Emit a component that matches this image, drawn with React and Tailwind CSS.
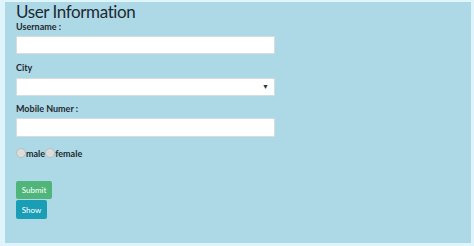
import React from 'react'

const App = () => {
  return (
    <div className="w-[474px] h-[246px] bg-[#dff5fb] pl-[5px] pt-[2px] pr-[3px] pb-[3px] font-['Lato','Open_Sans',sans-serif]">
      <div className="w-full h-full bg-[#add8e6] pl-[11px] flex flex-col items-start text-[#1f2a30]">
        <h1 className="text-[17px] leading-[20px] font-normal text-[#1c2a33] tracking-[-0.4px]">User Information</h1>
        <label className="text-[9px] leading-[10px] font-bold">Username :</label>
        <input type="text" className="mt-[4px] w-[259px] h-[18px] bg-white border border-[#d4dde0] rounded-[1px] outline-none" />

        <label className="mt-[9px] text-[9px] leading-[10px] font-bold">City</label>
        <div className="relative mt-[5px] w-[259px] h-[18px]">
          <select className="w-full h-full appearance-none bg-white border border-[#d4dde0] rounded-[1px] outline-none"></select>
          <span className="absolute right-[6px] top-[4px] text-[7px] leading-[9px] text-[#333]">▼</span>
        </div>

        <label className="mt-[8px] text-[9px] leading-[10px] font-bold">Mobile Numer :</label>
        <input type="text" className="mt-[4px] w-[259px] h-[19px] bg-white border border-[#d4dde0] rounded-[1px] outline-none" />

        <div className="mt-[12px] flex items-center text-[9px] leading-[10px] font-bold">
          <input type="radio" name="gender" className="appearance-none w-[10px] h-[10px] rounded-full bg-[#dcdcdc] border border-[#bdbdbd] -mt-[3px]" />
          <span>male</span>
          <input type="radio" name="gender" className="appearance-none w-[10px] h-[10px] rounded-full bg-[#dcdcdc] border border-[#bdbdbd] -mt-[3px]" />
          <span>female</span>
        </div>

        <button className="mt-[22px] w-[36px] h-[18px] bg-[#4fb57a] text-white text-[8px] rounded-[2px]">Submit</button>
        <button className="mt-[1px] w-[31px] h-[19px] bg-[#1a9eb6] text-white text-[8px] rounded-[2px]">Show</button>
      </div>
    </div>
  )
}

export default App
